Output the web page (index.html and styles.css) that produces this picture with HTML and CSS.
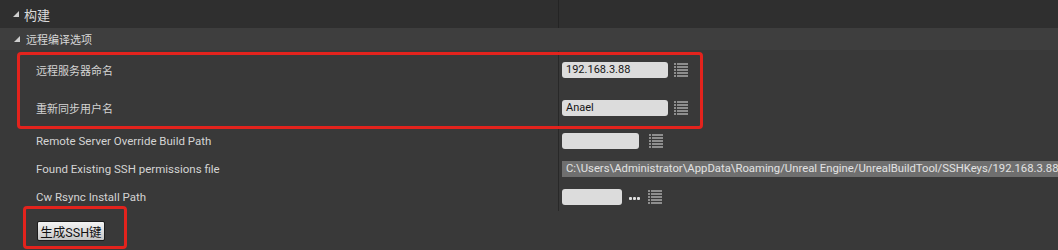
FILE: index.html
```html
<!DOCTYPE html>
<html lang="zh-CN">
<head>
  <meta charset="UTF-8" />
  <title>远程编译选项</title>
  <link rel="stylesheet" href="styles.css">
</head>
<body>
  <div id="panel">
    <div class="category">
      <div class="cat-name">
        <svg class="arrow" width="6" height="6" viewBox="0 0 6 6"><polygon points="6,0 6,6 0,6" /></svg>
        <span>构建</span>
      </div>
      <div class="cat-value"></div>
    </div>

    <div class="subcategory">
      <svg class="arrow" width="6" height="6" viewBox="0 0 6 6"><polygon points="6,0 6,6 0,6" /></svg>
      <span>远程编译选项</span>
    </div>

    <div class="row tall">
      <div class="name">远程服务器命名</div>
      <div class="value">
        <div class="field wide">192.168.3.88</div>
        <svg class="grid-icon" width="14" height="14" viewBox="0 0 14 14">
          <rect x="0" y="0" width="2" height="2" /><rect x="3" y="0" width="11" height="2" />
          <rect x="0" y="3" width="2" height="2" /><rect x="3" y="3" width="11" height="2" />
          <rect x="0" y="6" width="2" height="2" /><rect x="3" y="6" width="11" height="2" />
          <rect x="0" y="9" width="2" height="2" /><rect x="3" y="9" width="11" height="2" />
          <rect x="0" y="12" width="2" height="2" /><rect x="3" y="12" width="11" height="2" />
        </svg>
      </div>
    </div>

    <div class="row tall">
      <div class="name">重新同步用户名</div>
      <div class="value">
        <div class="field wide">Anael</div>
        <svg class="grid-icon" width="14" height="14" viewBox="0 0 14 14">
          <rect x="0" y="0" width="2" height="2" /><rect x="3" y="0" width="11" height="2" />
          <rect x="0" y="3" width="2" height="2" /><rect x="3" y="3" width="11" height="2" />
          <rect x="0" y="6" width="2" height="2" /><rect x="3" y="6" width="11" height="2" />
          <rect x="0" y="9" width="2" height="2" /><rect x="3" y="9" width="11" height="2" />
          <rect x="0" y="12" width="2" height="2" /><rect x="3" y="12" width="11" height="2" />
        </svg>
      </div>
    </div>

    <div class="row">
      <div class="name latin">Remote Server Override Build Path</div>
      <div class="value">
        <div class="field medium"></div>
        <svg class="grid-icon" width="14" height="14" viewBox="0 0 14 14">
          <rect x="0" y="0" width="2" height="2" /><rect x="3" y="0" width="11" height="2" />
          <rect x="0" y="3" width="2" height="2" /><rect x="3" y="3" width="11" height="2" />
          <rect x="0" y="6" width="2" height="2" /><rect x="3" y="6" width="11" height="2" />
          <rect x="0" y="9" width="2" height="2" /><rect x="3" y="9" width="11" height="2" />
          <rect x="0" y="12" width="2" height="2" /><rect x="3" y="12" width="11" height="2" />
        </svg>
      </div>
    </div>

    <div class="row">
      <div class="name latin">Found Existing SSH permissions file</div>
      <div class="value">
        <div class="path">C:\Users\Administrator\AppData\Roaming/Unreal Engine/UnrealBuildTool/SSHKeys/192.168.3.88</div>
      </div>
    </div>

    <div class="row">
      <div class="name latin">Cw Rsync Install Path</div>
      <div class="value">
        <div class="field short"></div>
        <span class="dots"><i></i><i></i><i></i></span>
        <svg class="grid-icon" width="14" height="14" viewBox="0 0 14 14">
          <rect x="0" y="0" width="2" height="2" /><rect x="3" y="0" width="11" height="2" />
          <rect x="0" y="3" width="2" height="2" /><rect x="3" y="3" width="11" height="2" />
          <rect x="0" y="6" width="2" height="2" /><rect x="3" y="6" width="11" height="2" />
          <rect x="0" y="9" width="2" height="2" /><rect x="3" y="9" width="11" height="2" />
          <rect x="0" y="12" width="2" height="2" /><rect x="3" y="12" width="11" height="2" />
        </svg>
      </div>
    </div>

    <div class="button-row">
      <button class="ue-button">生成SSH键</button>
    </div>

    <!-- annotation frames drawn over the screenshot -->
    <div class="mark mark-fields"></div>
    <div class="mark mark-button"></div>
  </div>
</body>
</html>
```

FILE: styles.css
```css
body {
  margin: 0;
  background: #393939;
  font-family: Roboto, "Noto Sans CJK SC", sans-serif;
  font-size: 11px;
  color: #d4d4d4;
  overflow: hidden;
}
#panel {
  position: relative;
  width: 1058px;
  height: 250px;
}
.arrow {
  fill: #cfcfcf;
  flex: none;
}
.category {
  display: grid;
  grid-template-columns: 559px 1fr;
  height: 28px;
  background: #2f2f2f;
}
.cat-name {
  display: flex;
  align-items: center;
  gap: 5px;
  padding-left: 13px;
  font-size: 13px;
  color: #dadada;
  border-right: 1px solid #242424;
}
.subcategory {
  display: flex;
  align-items: center;
  gap: 6px;
  height: 22px;
  padding-left: 14px;
  background: #3e3e3e;
  color: #d8d8d8;
  margin-bottom: 1px;
}
.row {
  display: grid;
  grid-template-columns: 559px 1fr;
  height: 28px;
}
.row.tall {
  height: 38px;
}
.name {
  display: flex;
  align-items: center;
  padding-left: 36px;
  border-right: 1px solid #282828;
}
.name.latin {
  font-size: 11.5px;
}
.value {
  display: flex;
  align-items: center;
  padding-left: 3px;
  overflow: hidden;
}
.field {
  height: 16px;
  line-height: 16px;
  background: #dcdcdc;
  color: #151515;
  border-radius: 3px;
  padding-left: 4px;
  box-sizing: border-box;
}
.field.wide { width: 106px; }
.field.medium { width: 77px; }
.field.short { width: 60px; }
.grid-icon {
  fill: #8e8e8e;
  margin-left: 6px;
}
.field.medium + .grid-icon { margin-left: 10px; }
.dots {
  display: flex;
  gap: 1px;
  margin-left: 7px;
  padding-top: 2px;
}
.dots i {
  width: 3px;
  height: 3px;
  border-radius: 1px;
  background: #e0e0e0;
}
.dots + .grid-icon { margin-left: 8px; }
.path {
  height: 16px;
  line-height: 16px;
  width: 495px;
  background: #6f6f6f;
  color: #e2e2e2;
  padding-left: 4px;
  font-size: 11.3px;
  white-space: nowrap;
  flex: none;
}
.button-row {
  padding: 10px 0 0 37px;
}
.ue-button {
  height: 20px;
  width: 68px;
  padding: 0;
  font-family: Roboto, "Noto Sans CJK SC", sans-serif;
  font-size: 12.5px;
  color: #111;
  background: linear-gradient(to bottom, #f4f4f4, #c6c6c6);
  border: 1px solid #1c1c1c;
  border-radius: 2px;
}
.mark {
  position: absolute;
  border: 3px solid #e3231d;
  border-radius: 4px;
  box-sizing: border-box;
}
.mark-fields {
  left: 17px;
  top: 52px;
  width: 686px;
  height: 77px;
}
.mark-button {
  left: 23px;
  top: 206px;
  width: 104px;
  height: 43px;
}
```
